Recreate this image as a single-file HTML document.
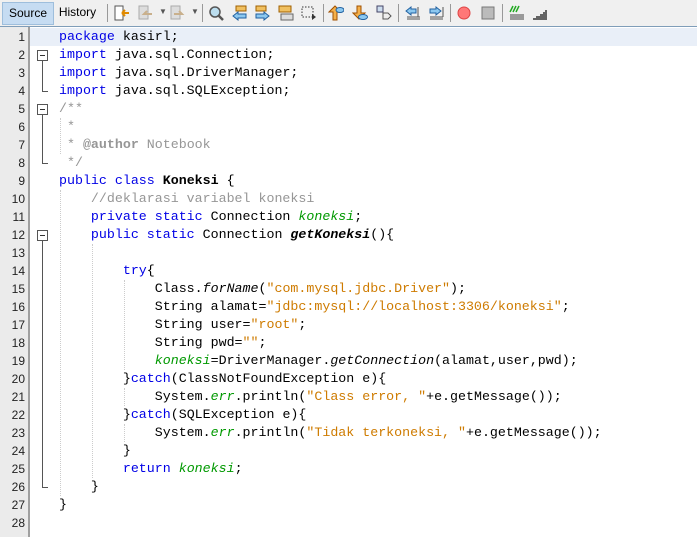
<!DOCTYPE html>
<html><head><meta charset="utf-8"><style>
body{margin:0;width:697px;height:537px;overflow:hidden;background:#fff;font-family:"Liberation Sans",sans-serif;position:relative}
#tb{position:absolute;left:0;top:0;width:697px;height:26px;background:#f0f0f0;border-bottom:1px solid #7f9db9}
.tab{position:absolute;top:2px;height:21px;font-size:12px;line-height:21px;text-align:center;color:#000}
.sep{position:absolute;top:4px;width:1px;height:18px;background:#999}
.ic{position:absolute;top:5px;width:16px;height:16px}
#gut{position:absolute;left:0;top:27px;width:28px;height:510px;background:#ebebeb;border-right:2px solid #a0a0a0}
.ln{position:absolute;left:0;width:25px;text-align:right;font:12px "Liberation Sans",sans-serif;color:#222;line-height:18px}
.cl{position:absolute;left:59px;font:13.3px "Liberation Mono",monospace;line-height:18px;white-space:pre;color:#000}
.k{color:#0000e6}.s{color:#ce7b00}.c{color:#969696}.f{color:#009900;font-style:italic}.i{font-style:italic}.b{font-weight:bold}
.fb{position:absolute;left:37px;width:9px;height:9px;border:1px solid #555;background:#fff}
.fb:after{content:"";position:absolute;left:2px;top:4px;width:5px;height:1px;background:#333}
.fv{position:absolute;left:42px;width:1px;background:#555}
.fh{position:absolute;left:42px;width:6px;height:1px;background:#555}
.dv{position:absolute;width:0;border-left:1px dotted #ccc}
</style></head><body>
<div id="tb">
<div class="tab" style="left:2px;width:50px;background:#c6dcf2;border:1px solid #9ebedc;">Source</div>
<div class="tab" style="left:55px;width:45px;">History</div>
<div class="sep" style="left:107px"></div>
<svg class="ic" style="left:114px" viewBox="0 0 16 16"><rect x="1" y="1" width="8" height="14" fill="#fff" stroke="#555"/><path d="M15 8H8M8 8l3-3M8 8l3 3" stroke="#e08a00" stroke-width="2" fill="none"/></svg>
<svg class="ic" style="left:138px" viewBox="0 0 16 16"><rect x="1" y="1" width="9" height="13" fill="#ddd" stroke="#aaa"/><path d="M14 9H6l3-3" stroke="#c9b08c" stroke-width="2" fill="none"/></svg>
<span style="position:absolute;left:159px;top:7px;font-size:8px;color:#555">▼</span>
<svg class="ic" style="left:170px" viewBox="0 0 16 16"><rect x="1" y="1" width="9" height="13" fill="#ddd" stroke="#aaa"/><path d="M4 9h8l-3-3" stroke="#c9b08c" stroke-width="2" fill="none"/></svg>
<span style="position:absolute;left:191px;top:7px;font-size:8px;color:#555">▼</span>
<div class="sep" style="left:202px"></div>
<svg class="ic" style="left:208px" viewBox="0 0 16 16"><circle cx="7" cy="7" r="5" fill="#bde" stroke="#555" stroke-width="1.5"/><path d="M10 10l5 5" stroke="#555" stroke-width="2.5"/></svg>
<svg class="ic" style="left:232px" viewBox="0 0 16 16"><rect x="4" y="1" width="10" height="5" fill="#f0c060" stroke="#a06000"/><path d="M1 11l5-4v2h8v4H6v2z" fill="#8cc8f0" stroke="#2060a0"/></svg>
<svg class="ic" style="left:254px" viewBox="0 0 16 16"><rect x="2" y="1" width="10" height="5" fill="#f0c060" stroke="#a06000"/><path d="M15 11l-5-4v2H2v4h8v2z" fill="#8cc8f0" stroke="#2060a0"/></svg>
<svg class="ic" style="left:278px" viewBox="0 0 16 16"><rect x="1" y="1" width="12" height="6" fill="#f0c060" stroke="#a06000"/><rect x="3" y="9" width="12" height="6" fill="#ddd" stroke="#666"/></svg>
<svg class="ic" style="left:301px" viewBox="0 0 16 16"><rect x="1" y="2" width="11" height="10" fill="none" stroke="#333" stroke-dasharray="1.5 1.5"/><path d="M11 9l4 3-4 3z" fill="#333"/></svg>
<div class="sep" style="left:323px"></div>
<svg class="ic" style="left:328px" viewBox="0 0 16 16"><path d="M7 1l6 6H9v8H5V7H1z" fill="#f5b04a" stroke="#a05000"/><ellipse cx="12" cy="5" rx="4" ry="2.5" fill="#8cc8f0" stroke="#2060a0"/></svg>
<svg class="ic" style="left:352px" viewBox="0 0 16 16"><path d="M7 14l6-6H9V1H5v7H1z" fill="#f5b04a" stroke="#a05000"/><ellipse cx="11" cy="12" rx="4.5" ry="2.5" fill="#8cc8f0" stroke="#2060a0"/></svg>
<svg class="ic" style="left:376px" viewBox="0 0 16 16"><rect x="1" y="1" width="6" height="6" fill="#cde" stroke="#446"/><path d="M7 8h5l3 3-3 3H7z" fill="#eee" stroke="#555"/></svg>
<div class="sep" style="left:398px"></div>
<svg class="ic" style="left:405px" viewBox="0 0 16 16"><path d="M1 6l5-4v2h5v4H6v2z" fill="#8cc8f0" stroke="#2060a0"/><path d="M2 12h13M2 14h13M13 2v10" stroke="#555"/></svg>
<svg class="ic" style="left:428px" viewBox="0 0 16 16"><path d="M13 6L8 2v2H2v4h6v2z" fill="#8cc8f0" stroke="#2060a0"/><path d="M2 12h13M2 14h13M15 2v10" stroke="#555"/></svg>
<div class="sep" style="left:450px"></div>
<svg class="ic" style="left:456px" viewBox="0 0 16 16"><circle cx="8" cy="8" r="6" fill="#f77" stroke="#d44"/></svg>
<svg class="ic" style="left:480px" viewBox="0 0 16 16"><rect x="2" y="2" width="12" height="12" fill="#bbb" stroke="#777"/></svg>
<div class="sep" style="left:502px"></div>
<svg class="ic" style="left:509px" viewBox="0 0 16 16"><path d="M1 7l3-6M4 7l3-6M7 7l3-6" stroke="#2a2" stroke-width="1.5"/><path d="M1 10h14M1 12h14M1 14h14" stroke="#444"/></svg>
<svg class="ic" style="left:532px" viewBox="0 0 16 16"><path d="M1 14h14M4 12h11M8 10h7M11 8h4M13 6h2" stroke="#111" stroke-width="1.2"/></svg>
</div>
<div style="position:absolute;left:30px;top:28px;width:667px;height:18px;background:#e9eff8"></div>
<div id="gut"></div>
<div class="ln" style="top:28px">1</div><div class="ln" style="top:46px">2</div><div class="ln" style="top:64px">3</div><div class="ln" style="top:82px">4</div><div class="ln" style="top:100px">5</div><div class="ln" style="top:118px">6</div><div class="ln" style="top:136px">7</div><div class="ln" style="top:154px">8</div><div class="ln" style="top:172px">9</div><div class="ln" style="top:190px">10</div><div class="ln" style="top:208px">11</div><div class="ln" style="top:226px">12</div><div class="ln" style="top:244px">13</div><div class="ln" style="top:262px">14</div><div class="ln" style="top:280px">15</div><div class="ln" style="top:298px">16</div><div class="ln" style="top:316px">17</div><div class="ln" style="top:334px">18</div><div class="ln" style="top:352px">19</div><div class="ln" style="top:370px">20</div><div class="ln" style="top:388px">21</div><div class="ln" style="top:406px">22</div><div class="ln" style="top:424px">23</div><div class="ln" style="top:442px">24</div><div class="ln" style="top:460px">25</div><div class="ln" style="top:478px">26</div><div class="ln" style="top:496px">27</div><div class="ln" style="top:514px">28</div>
<div class="fb" style="top:50px"></div><div class="fv" style="top:61px;height:30px"></div><div class="fh" style="top:91px"></div>
<div class="fb" style="top:104px"></div><div class="fv" style="top:115px;height:48px"></div><div class="fh" style="top:163px"></div>
<div class="fb" style="top:230px"></div><div class="fv" style="top:241px;height:246px"></div><div class="fh" style="top:487px"></div>
<div class="dv" style="left:60px;top:118px;height:36px"></div>
<div class="dv" style="left:60px;top:190px;height:306px"></div>
<div class="dv" style="left:92px;top:244px;height:234px"></div>
<div class="dv" style="left:124px;top:280px;height:90px"></div>
<div class="dv" style="left:124px;top:388px;height:18px"></div>
<div class="dv" style="left:124px;top:424px;height:18px"></div>
<div class="cl" style="top:28px"><span class="k">package</span> kasirl;</div>
<div class="cl" style="top:46px"><span class="k">import</span> java.sql.Connection;</div>
<div class="cl" style="top:64px"><span class="k">import</span> java.sql.DriverManager;</div>
<div class="cl" style="top:82px"><span class="k">import</span> java.sql.SQLException;</div>
<div class="cl c" style="top:100px">/**</div>
<div class="cl c" style="top:118px"> *</div>
<div class="cl c" style="top:136px"> * <b>@author</b> Notebook</div>
<div class="cl c" style="top:154px"> */</div>
<div class="cl" style="top:172px"><span class="k">public class</span> <b>Koneksi</b> {</div>
<div class="cl" style="top:190px">    <span class="c">//deklarasi variabel koneksi</span></div>
<div class="cl" style="top:208px">    <span class="k">private static</span> Connection <span class="f">koneksi</span>;</div>
<div class="cl" style="top:226px">    <span class="k">public static</span> Connection <span class="i b">getKoneksi</span>(){</div>
<div class="cl" style="top:262px">        <span class="k">try</span>{</div>
<div class="cl" style="top:280px">            Class.<span class="i">forName</span>(<span class="s">"com.mysql.jdbc.Driver"</span>);</div>
<div class="cl" style="top:298px">            String alamat=<span class="s">"jdbc:mysql://localhost:3306/koneksi"</span>;</div>
<div class="cl" style="top:316px">            String user=<span class="s">"root"</span>;</div>
<div class="cl" style="top:334px">            String pwd=<span class="s">""</span>;</div>
<div class="cl" style="top:352px">            <span class="f">koneksi</span>=DriverManager.<span class="i">getConnection</span>(alamat,user,pwd);</div>
<div class="cl" style="top:370px">        }<span class="k">catch</span>(ClassNotFoundException e){</div>
<div class="cl" style="top:388px">            System.<span class="f">err</span>.println(<span class="s">"Class error, "</span>+e.getMessage());</div>
<div class="cl" style="top:406px">        }<span class="k">catch</span>(SQLException e){</div>
<div class="cl" style="top:424px">            System.<span class="f">err</span>.println(<span class="s">"Tidak terkoneksi, "</span>+e.getMessage());</div>
<div class="cl" style="top:442px">        }</div>
<div class="cl" style="top:460px">        <span class="k">return</span> <span class="f">koneksi</span>;</div>
<div class="cl" style="top:478px">    }</div>
<div class="cl" style="top:496px">}</div>
</body></html>
